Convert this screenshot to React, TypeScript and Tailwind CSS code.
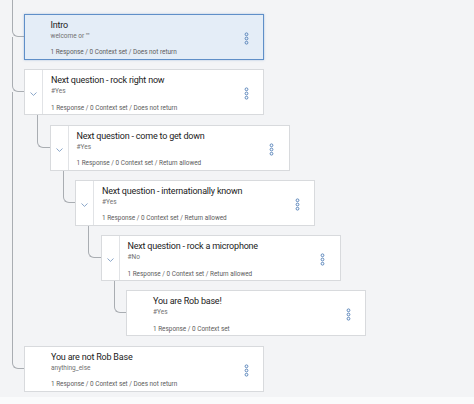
import React from "react";

type DialogNode = {
  title: string;
  cond: string;
  meta: string;
  selected?: boolean;
  chevron?: boolean;
  children?: DialogNode[];
};

const DOES_NOT = "1 Response / 0 Context set / Does not return";
const ALLOWED = "1 Response / 0 Context set / Return allowed";

const tree: DialogNode[] = [
  { title: "Intro", cond: 'welcome or ""', meta: DOES_NOT, selected: true },
  {
    title: "Next question - rock right now",
    cond: "#Yes",
    meta: DOES_NOT,
    chevron: true,
    children: [
      {
        title: "Next question - come to get down",
        cond: "#Yes",
        meta: ALLOWED,
        chevron: true,
        children: [
          {
            title: "Next question - internationally known",
            cond: "#Yes",
            meta: ALLOWED,
            chevron: true,
            children: [
              {
                title: "Next question - rock a microphone",
                cond: "#No",
                meta: ALLOWED,
                chevron: true,
                children: [{ title: "You are Rob base!", cond: "#Yes", meta: "1 Response / 0 Context set" }],
              },
            ],
          },
        ],
      },
    ],
  },
  { title: "You are not Rob Base", cond: "anything_else", meta: DOES_NOT },
];

function Dots() {
  return (
    <svg width="5" height="13" viewBox="0 0 5 13" fill="none" stroke="#4f7db5" strokeWidth="0.9">
      <circle cx="2.5" cy="2.3" r="1.4" />
      <circle cx="2.5" cy="6.5" r="1.4" />
      <circle cx="2.5" cy="10.7" r="1.4" />
    </svg>
  );
}

function Chevron() {
  return (
    <svg width="7" height="4" viewBox="0 0 7 4" fill="none" stroke="#7c9bc2" strokeWidth="0.9">
      <path d="M0.5 0.5 L3.5 3.4 L6.5 0.5" />
    </svg>
  );
}

function Card({ node }: { node: DialogNode }) {
  return (
    <div
      className={`flex h-[46px] w-[240px] shrink-0 ${
        node.selected
          ? "border-[1.5px] border-[#5f8fc8] bg-[#e4edf7] shadow-[0_0_2px_rgba(95,143,200,0.5)]"
          : "border border-[#d8dadd] bg-white"
      }`}
    >
      {node.chevron ? (
        <>
          <div className="flex w-[18px] shrink-0 items-center justify-center border-r border-[#e1e3e6] pt-[4px]">
            <Chevron />
          </div>
          <div className="w-[8px] shrink-0" />
        </>
      ) : (
        <div className={node.selected ? "w-[25.5px] shrink-0" : "w-[26px] shrink-0"} />
      )}
      <div className={`flex min-w-0 flex-1 flex-col ${node.selected ? "pt-[3.5px]" : "pt-[4px]"}`}>
        <div className="whitespace-nowrap text-[9px] font-normal leading-[12px] tracking-[-0.2px] text-[#222]">
          {node.title}
        </div>
        <div className="whitespace-nowrap text-[6.5px] leading-[10px] text-[#707070]">{node.cond}</div>
        <div className="mt-[6.5px] whitespace-nowrap text-[6.4px] leading-[10px] text-[#5c5c5c]">{node.meta}</div>
      </div>
      <div className="flex w-[34px] shrink-0 items-center justify-center pt-[3px]">
        <Dots />
      </div>
    </div>
  );
}

function Item({ node, top, last }: { node: DialogNode; top: number; last: boolean }) {
  const first = top > 10;
  return (
    <div className="flex">
      <div className="flex w-[12.5px] shrink-0 flex-col">
        <div
          className={`${first ? "h-[37px]" : "h-[32.3px]"} shrink-0 rounded-bl-[6px] border-b border-l border-[#a9adb2]`}
        />
        {!last && <div className="flex-1 border-l border-[#a9adb2]" />}
      </div>
      <div className={`flex flex-col ${first ? "pt-[14px]" : "pt-[9.3px]"}`}>
        <Card node={node} />
        {node.children && (
          <div className="flex flex-col pl-[13px]">
            {node.children.map((c, i) => (
              <Item key={c.title} node={c} top={9.3} last={i === node.children!.length - 1} />
            ))}
          </div>
        )}
      </div>
    </div>
  );
}

export default function App() {
  return (
    <div className="flex h-[404px] w-[474px] flex-col overflow-hidden bg-[#f3f4f6] font-['Roboto',sans-serif]">
      <div className="h-[397px] shrink-0 pl-[11.5px]">
        {tree.map((n, i) => (
          <Item key={n.title} node={n} top={i === 0 ? 14 : 9.3} last={i === tree.length - 1} />
        ))}
      </div>
      <div className="flex-1 bg-[#fafbfc]" />
    </div>
  );
}
